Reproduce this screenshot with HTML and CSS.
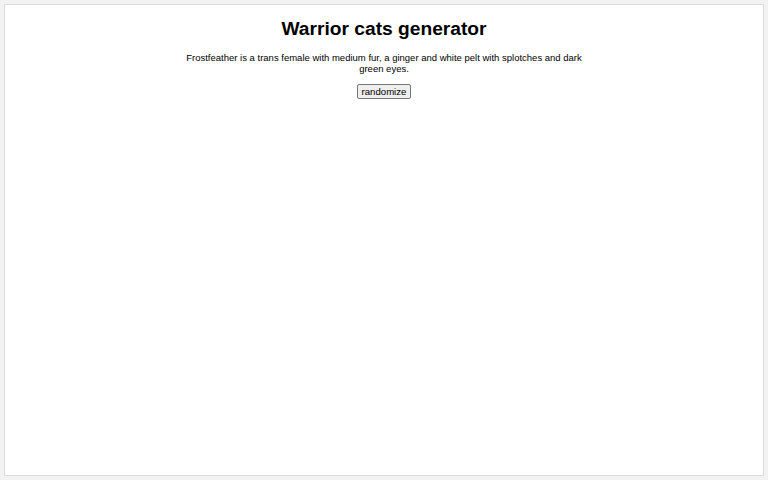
FILE: index.html
```html
<!DOCTYPE html>
<html lang="en">
<head>
<meta charset="utf-8">
<title>Warrior cats generator</title>
<link rel="stylesheet" href="styles.css">
</head>
<body>
<main class="card">
  <h1 class="title">Warrior cats generator</h1>
  <p class="cat">Frostfeather is a trans female with medium fur, a ginger and white pelt with splotches and dark green eyes.</p>
  <button class="randomize" type="button">randomize</button>
</main>
</body>
</html>
```
FILE: styles.css
```css
html, body {
  height: 100%;
}

body {
  margin: 0;
  padding: 4px;
  box-sizing: border-box;
  background: #f2f2f2;
  font-family: "Liberation Sans", Arial, sans-serif;
  color: #000;
}

.card {
  box-sizing: border-box;
  height: 100%;
  background: #fff;
  border: 1px solid #dcdcdc;
  display: flex;
  flex-direction: column;
  align-items: center;
  padding-top: 13px;
}

.title {
  margin: 0;
  font-size: 19.2px;
  font-weight: bold;
  line-height: 22px;
}

.cat {
  margin: 12px 0 0;
  max-width: 400px;
  text-align: center;
  font-size: 9.5px;
  line-height: 11px;
}

.randomize {
  margin-top: 10px;
  font-family: "Liberation Sans", Arial, sans-serif;
  font-size: 9.6px;
  padding: 1px 4px;
  background: #efefef;
  border: 1px solid #767676;
  border-radius: 2px;
  color: #000;
}
```
